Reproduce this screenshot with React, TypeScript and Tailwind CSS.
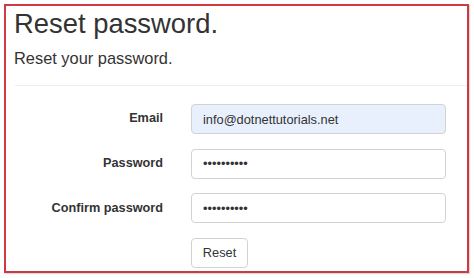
import React from 'react';

const font = { fontFamily: '"Liberation Sans", Arial, Helvetica, sans-serif' };

function Row({ label, children }: { label: string; children: React.ReactNode }) {
  return (
    <div className="flex h-[30px] items-center">
      <label className="w-[157px] text-right text-[12.7px] font-bold text-[#333]">{label}</label>
      <div className="ml-[28px]">{children}</div>
    </div>
  );
}

const inputCls =
  'block h-[30px] w-[255px] rounded-[4px] border border-[#d2d2d2] px-[11px] text-[12.8px] text-[#333] outline-none';

export default function App() {
  return (
    <div className="h-[278px] w-[474px] bg-white pl-[4px] pt-[4px]" style={font}>
      <div className="h-[269px] w-[465px] border-2 border-[#cf3a41] shadow-[1px_1px_1px_rgba(0,0,0,0.15)]">
        {/* Header */}
        <div className="pl-[8px] pt-[3px]">
          <h2 className="text-[27.4px] font-normal leading-[30px] text-[#333]">Reset password.</h2>
          <p className="mt-[8px] text-[16.4px] leading-[22px] text-[#333]">Reset your password.</p>
        </div>
        <hr className="ml-[9px] mt-[16px] border-t border-[#eee]" />

        {/* Form */}
        <div className="mt-[18px] flex flex-col gap-[14.7px]">
          <Row label="Email">
            <input
              readOnly
              value="info@dotnettutorials.net"
              className={`${inputCls} bg-[#e8f0fe]`}
              style={font}
            />
          </Row>
          <Row label="Password">
            <input readOnly type="password" value="1234567890" className={`${inputCls} bg-white`} style={font} />
          </Row>
          <Row label="Confirm password">
            <input readOnly type="password" value="1234567890" className={`${inputCls} bg-white`} style={font} />
          </Row>
          <div className="flex h-[30px] items-center">
            <div className="ml-[185px]">
              <button
                className="h-[30px] w-[57px] rounded-[4px] border border-[#d2d2d2] bg-white text-[12.8px] text-[#333]"
                style={font}
              >
                Reset
              </button>
            </div>
          </div>
        </div>
      </div>
    </div>
  );
}
